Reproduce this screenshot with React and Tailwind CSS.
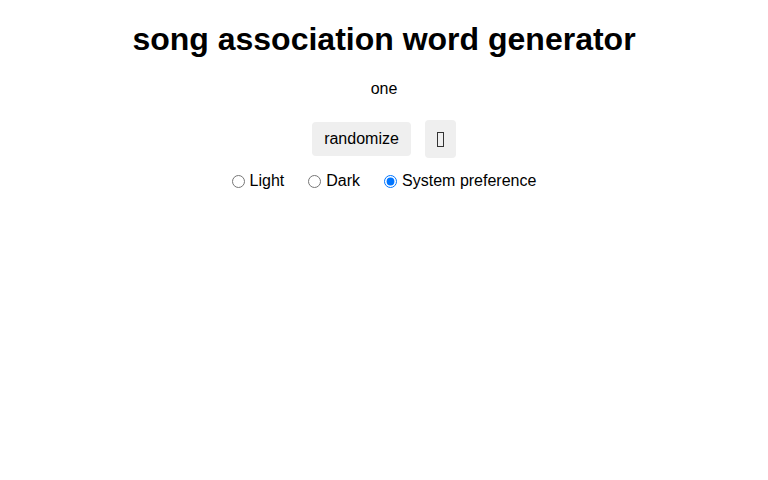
import { useState } from 'react';

const words = ['one', 'love', 'night', 'heart', 'dance', 'fire', 'blue', 'home'];

const App = () => {
  const [word, setWord] = useState('one');
  const [theme, setTheme] = useState('system');

  const randomize = () => {
    setWord(words[Math.floor(Math.random() * words.length)]);
  };

  return (
    <div className="min-h-screen bg-white text-black font-['Liberation_Sans',Arial,sans-serif] flex flex-col items-center">
      <h1 className="text-[32px] leading-[37px] font-bold mt-[21px]">song association word generator</h1>
      <p className="text-base leading-[18px] mt-[22px]">{word}</p>
      <div className="flex items-center gap-[14px] mt-[22px]">
        <button
          onClick={randomize}
          className="bg-[#efefef] rounded px-3 h-[34px] text-base"
        >
          randomize
        </button>
        <button className="bg-[#efefef] rounded w-[31px] h-[38px] flex items-center justify-center">
          {/* missing glyph box */}
          <span className="block w-[7px] h-[15px] border border-[#333]"></span>
        </button>
      </div>
      <div className="flex items-center gap-6 mt-[14px] text-base leading-[18px]">
        <label className="flex items-center gap-[5px]">
          <input type="radio" name="theme" checked={theme === 'light'} onChange={() => setTheme('light')} className="w-[13px] h-[13px] m-0" />
          Light
        </label>
        <label className="flex items-center gap-[5px]">
          <input type="radio" name="theme" checked={theme === 'dark'} onChange={() => setTheme('dark')} className="w-[13px] h-[13px] m-0" />
          Dark
        </label>
        <label className="flex items-center gap-[5px]">
          <input type="radio" name="theme" checked={theme === 'system'} onChange={() => setTheme('system')} className="w-[13px] h-[13px] m-0" />
          System preference
        </label>
      </div>
    </div>
  );
};

export default App;
